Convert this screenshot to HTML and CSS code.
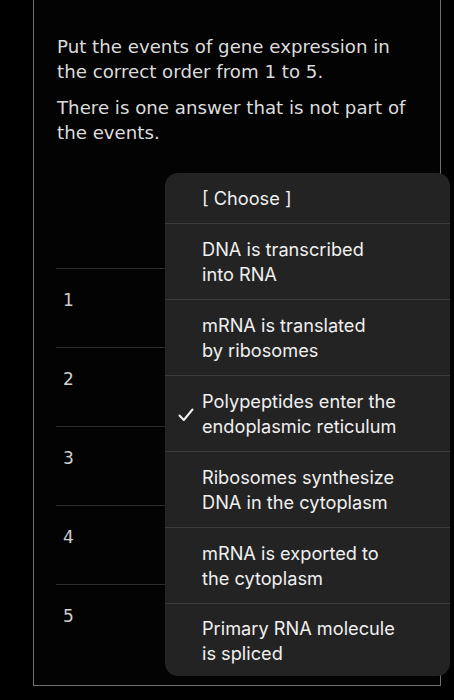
FILE: index.html
```html
<!DOCTYPE html>
<html>
<head>
<meta charset="utf-8">
<link rel="stylesheet" href="styles.css">
</head>
<body>
<div class="frame">
  <div class="question">
    <p>Put the events of gene expression in the correct order from 1 to 5.</p>
    <p>There is one answer that is not part of the events.</p>
  </div>
  <div class="rows">
    <div class="row"><span class="num">1</span></div>
    <div class="row"><span class="num">2</span></div>
    <div class="row"><span class="num">3</span></div>
    <div class="row"><span class="num">4</span></div>
    <div class="row last"><span class="num">5</span></div>
  </div>
</div>
<div class="menu">
  <div class="item choose"><span class="label">[ Choose ]</span></div>
  <div class="item"><span class="label">DNA is transcribed<br>into RNA</span></div>
  <div class="item"><span class="label">mRNA is translated<br>by ribosomes</span></div>
  <div class="item selected">
    <svg class="check" width="16" height="14" viewBox="0 0 16 14"><path d="M1.5 7.5 L5.8 12 L14.5 1.5" fill="none" stroke="#f2f2f2" stroke-width="2" stroke-linecap="round" stroke-linejoin="round"/></svg>
    <span class="label">Polypeptides enter the<br>endoplasmic reticulum</span>
  </div>
  <div class="item"><span class="label">Ribosomes synthesize<br>DNA in the cytoplasm</span></div>
  <div class="item"><span class="label">mRNA is exported to<br>the cytoplasm</span></div>
  <div class="item last"><span class="label">Primary RNA molecule<br>is spliced</span></div>
</div>
</body>
</html>
```
FILE: styles.css
```css
html, body {
  margin: 0;
  padding: 0;
  background: #000;
}
body {
  width: 454px;
  height: 700px;
  overflow: hidden;
  position: relative;
}
.frame {
  margin-left: 33px;
  width: 406px;
  height: 685px;
  border: 1.5px solid #6e6e6e;
  border-top: none;
  background: #030303;
  box-sizing: content-box;
}
.question {
  padding: 34px 20px 0 23px;
  font-family: "DejaVu Sans", Verdana, sans-serif;
  font-size: 18.2px;
  line-height: 25px;
  color: #dcdcdc;
}
.question p {
  margin: 0 0 11px 0;
}
.rows {
  margin: 123px 20px 0 22px;
}
.row {
  height: 79px;
  border-top: 1px solid #2c2c2c;
  padding-left: 7px;
  padding-top: 21px;
  box-sizing: border-box;
}
.num {
  font-family: "DejaVu Sans", Verdana, sans-serif;
  font-size: 17px;
  color: #cfcfcf;
}
.menu {
  position: absolute;
  left: 165px;
  top: 173px;
  width: 285px;
  background: #232323;
  border-radius: 13px;
  overflow: hidden;
  font-family: Inter, "Noto Sans", sans-serif;
  font-size: 18.2px;
  line-height: 25px;
  color: #f0f0f0;
}
.item {
  height: 76px;
  border-top: 1px solid #3b3b3b;
  display: flex;
  align-items: center;
  position: relative;
  padding-left: 37px;
  padding-top: 1px;
  box-sizing: border-box;
}
.item.choose {
  height: 50px;
  border-top: none;
}
.item.last {
  height: 73px;
  padding-top: 2px;
}
.check {
  position: absolute;
  left: 13px;
  top: 32px;
}
```
